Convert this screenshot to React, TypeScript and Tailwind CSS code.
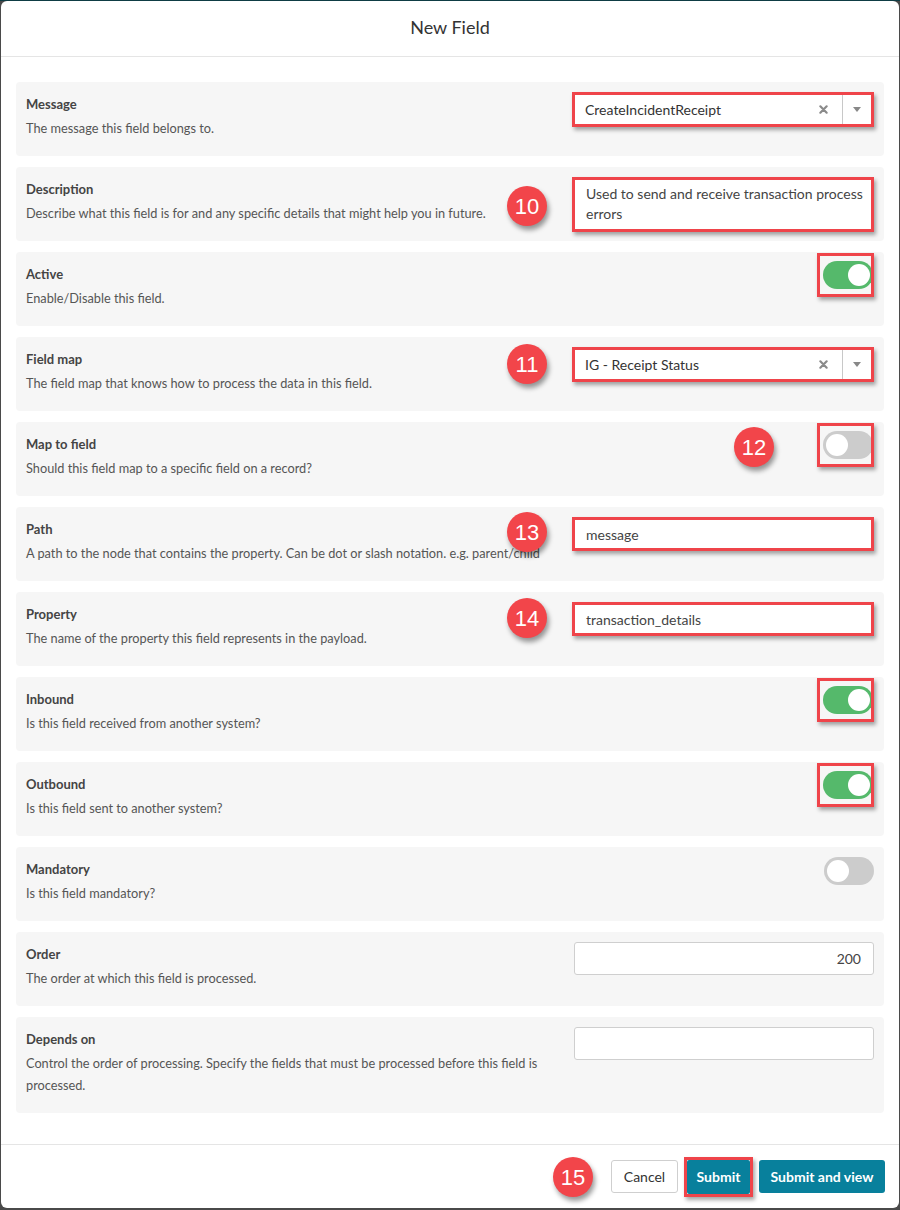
import React from "react";

const RED = "border-[3px] border-[#ef444a] shadow-[2px_3px_4px_rgba(0,0,0,0.35)]";

function Badge({ n, className }: { n: string; className: string }) {
  return (
    <div
      className={`absolute w-[40px] h-[40px] rounded-full bg-[#f2454a] text-white flex items-center justify-center text-[22px] shadow-[2px_4px_5px_rgba(0,0,0,0.4)] ${className}`}
      style={{ fontFamily: '"Liberation Sans", Arial, sans-serif' }}
    >
      {n}
    </div>
  );
}

function Toggle({ on, boxed }: { on: boolean; boxed?: boolean }) {
  const sw = (
    <div
      className={`w-[50px] h-[28px] rounded-full flex items-center px-[3px] ${
        on ? "bg-[#55b96b] justify-end" : "bg-[#cccccc] justify-start"
      }`}
    >
      <div className="w-[22px] h-[22px] rounded-full bg-white" />
    </div>
  );
  if (boxed) {
    return (
      <div className={`relative w-[57px] h-[44px] ${RED} mt-[1px] overflow-hidden`}>
        <div className="absolute left-[3px] top-[5px]">{sw}</div>
      </div>
    );
  }
  return <div className="mt-[10px]">{sw}</div>;
}

function Select({ value }: { value: string }) {
  return (
    <div className={`mt-[10px] w-[302px] h-[35px] ${RED} bg-white flex items-center`}>
      <div className="flex-1 pl-[10px] text-[14px] text-[#333]">{value}</div>
      <div className="w-[38px] flex items-center justify-center">
        <svg width="9" height="9" viewBox="0 0 10 10">
          <path d="M1.5 1.5 L8.5 8.5 M8.5 1.5 L1.5 8.5" stroke="#8a8a8a" strokeWidth="2.4" strokeLinecap="round" />
        </svg>
      </div>
      <div className="w-[29px] h-full border-l border-[#c8c8c8] flex items-center justify-center">
        <svg width="8" height="5" viewBox="0 0 8 5">
          <path d="M0 0 L8 0 L4 5 Z" fill="#888" />
        </svg>
      </div>
    </div>
  );
}

function TextInput({ value }: { value: string }) {
  return (
    <div className={`mt-[10px] w-[302px] h-[34px] ${RED} bg-white flex items-center pl-[11px] text-[14px] text-[#444]`}>
      {value}
    </div>
  );
}

function PlainInput({ value }: { value?: string }) {
  return (
    <div className="mt-[10px] w-[300px] h-[33px] border border-[#cfcfcf] rounded-[3px] bg-white flex items-center justify-end pr-[12px] text-[14px] text-[#444]">
      {value}
    </div>
  );
}

function Row({
  label,
  desc,
  control,
  badge,
  tall,
}: {
  label: string;
  desc: string;
  control: React.ReactNode;
  badge?: React.ReactNode;
  tall?: boolean;
}) {
  return (
    <div className={`relative bg-[#f6f6f6] rounded-[4px] flex justify-between items-start pl-[10px] pr-[10px] pt-[12px] pb-[17px] ${tall ? "" : "h-[74px]"}`}>
      <div className="flex flex-col max-w-[525px]">
        <div className="text-[13px] leading-[20px] font-bold text-[#444]">{label}</div>
        <div className="text-[12.75px] leading-[22px] mt-[3px] text-[#555]">{desc}</div>
      </div>
      <div className="-mt-[12px] shrink-0 flex justify-end">{control}</div>
      {badge}
    </div>
  );
}

export default function App() {
  return (
    <div
      className="w-[900px] h-[1210px] bg-[#4a4a4a] border-t border-t-[#0e3c44] pl-[1px] pr-[1px] pb-[2px]"
      style={{ fontFamily: 'Lato, "Open Sans", sans-serif' }}
    >
      <div className="w-full h-full bg-white rounded-[6px] flex flex-col">
        <div className="h-[56px] border-b border-[#e5e5e5] flex items-center justify-center text-[18px] text-[#333] pb-[2px]">
          New Field
        </div>
        <div className="flex-1 px-[15px] pt-[25px] pb-[30px] flex flex-col gap-[11px]">
          <Row
            label="Message"
            desc="The message this field belongs to."
            control={<Select value="CreateIncidentReceipt" />}
          />
          <Row
            label="Description"
            desc="Describe what this field is for and any specific details that might help you in future."
            control={
              <div className={`mt-[10px] w-[302px] h-[55px] ${RED} bg-white pl-[11px] pt-[4px] text-[14px] leading-[20px] text-[#444]`}>
                Used to send and receive transaction process errors
              </div>
            }
            badge={<Badge n="10" className="left-[491px] top-[19px]" />}
          />
          <Row label="Active" desc="Enable/Disable this field." control={<Toggle on boxed />} />
          <Row
            label="Field map"
            desc="The field map that knows how to process the data in this field."
            control={<Select value="IG - Receipt Status" />}
            badge={<Badge n="11" className="left-[491px] top-[7px]" />}
          />
          <Row
            label="Map to field"
            desc="Should this field map to a specific field on a record?"
            control={<Toggle on={false} boxed />}
            badge={<Badge n="12" className="left-[718px] top-[5px]" />}
          />
          <Row
            label="Path"
            desc="A path to the node that contains the property. Can be dot or slash notation. e.g. parent/child"
            control={<TextInput value="message" />}
            badge={<Badge n="13" className="left-[491px] top-[5px]" />}
          />
          <Row
            label="Property"
            desc="The name of the property this field represents in the payload."
            control={<TextInput value="transaction_details" />}
            badge={<Badge n="14" className="left-[491px] top-[6px]" />}
          />
          <Row label="Inbound" desc="Is this field received from another system?" control={<Toggle on boxed />} />
          <Row label="Outbound" desc="Is this field sent to another system?" control={<Toggle on boxed />} />
          <Row label="Mandatory" desc="Is this field mandatory?" control={<Toggle on={false} />} />
          <Row label="Order" desc="The order at which this field is processed." control={<PlainInput value="200" />} />
          <Row
            label="Depends on"
            desc="Control the order of processing. Specify the fields that must be processed before this field is processed."
            control={<PlainInput />}
            tall
          />
        </div>
        <div className="relative h-[64px] border-t border-[#e5e5e5] flex items-center justify-end pr-[14px] gap-[6px]">
          <Badge n="15" className="left-[552px] top-[12px]" />
          <button className="w-[67px] h-[33px] border border-[#cfcfcf] rounded-[3px] bg-white text-[14px] text-[#333]">
            Cancel
          </button>
          <div className={`w-[69px] h-[40px] ${RED} flex items-center`}>
            <button className="w-full h-[34px] rounded-[2px] bg-[#08809c] text-white text-[14px] font-bold">
              Submit
            </button>
          </div>
          <button className="w-[126px] h-[33px] rounded-[3px] bg-[#08809c] text-white text-[14px] font-bold">
            Submit and view
          </button>
        </div>
      </div>
    </div>
  );
}
